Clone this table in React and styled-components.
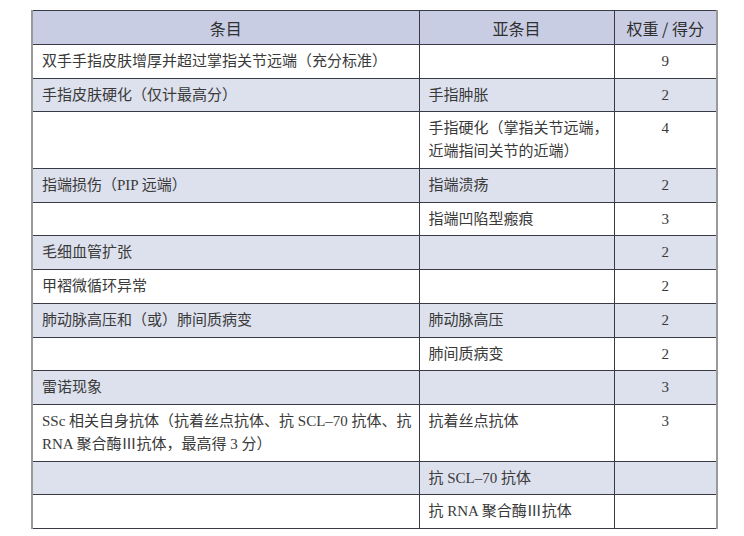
import React from 'react';
import styled, { createGlobalStyle } from 'styled-components';

const GlobalStyle = createGlobalStyle`
  html, body {
    margin: 0;
    padding: 0;
    background: #fff;
  }
`;

const rows = [
  { item: '双手手指皮肤增厚并超过掌指关节远端（充分标准）', sub: '', score: '9' },
  { item: '手指皮肤硬化（仅计最高分）', sub: '手指肿胀', score: '2' },
  { item: '', sub: ['手指硬化（掌指关节远端，', '近端指间关节的近端）'], score: '4' },
  { item: '指端损伤（PIP 远端）', sub: '指端溃疡', score: '2' },
  { item: '', sub: '指端凹陷型瘢痕', score: '3' },
  { item: '毛细血管扩张', sub: '', score: '2' },
  { item: '甲褶微循环异常', sub: '', score: '2' },
  { item: '肺动脉高压和（或）肺间质病变', sub: '肺动脉高压', score: '2' },
  { item: '', sub: '肺间质病变', score: '2' },
  { item: '雷诺现象', sub: '', score: '3' },
  {
    item: ['SSc 相关自身抗体（抗着丝点抗体、抗 SCL–70 抗体、抗', 'RNA 聚合酶Ⅲ抗体，最高得 3 分）'],
    sub: '抗着丝点抗体',
    score: '3',
  },
  { item: '', sub: '抗 SCL–70 抗体', score: '' },
  { item: '', sub: '抗 RNA 聚合酶Ⅲ抗体', score: '' },
];

function Lines({ text }) {
  if (Array.isArray(text)) {
    return text.map((t, i) => <Line key={i}>{t}</Line>);
  }
  return text;
}

export default function App() {
  return (
    <>
      <GlobalStyle />
      <Page>
        <Table>
          <colgroup>
            <col style={{ width: 387 }} />
            <col style={{ width: 195 }} />
            <col style={{ width: 103 }} />
          </colgroup>
          <thead>
            <tr>
              <Head>条目</Head>
              <Head>亚条目</Head>
              <Head>权重 / 得分</Head>
            </tr>
          </thead>
          <tbody>
            {rows.map((r, i) => (
              <Row key={i} $shaded={i % 2 === 1}>
                <Cell>
                  <Lines text={r.item} />
                </Cell>
                <Cell>
                  <Lines text={r.sub} />
                </Cell>
                <Cell $center>{r.score}</Cell>
              </Row>
            ))}
          </tbody>
        </Table>
      </Page>
    </>
  );
}

const Page = styled.div`
  padding: 10px 0 0 31px;
  width: 744px;
  height: 536px;
  box-sizing: border-box;
  overflow: hidden;
`;

const Table = styled.table`
  width: 686px;
  table-layout: fixed;
  border-collapse: collapse;
  border-left: 2px solid #9a9a9a;
  border-right: 2px solid #9a9a9a;
  border-top: 1px solid #3a3a44;
  font-family: "Liberation Serif", "Noto Sans CJK SC", serif;
  font-size: 15px;
  color: #3a3a3a;
`;

const Head = styled.th`
  height: 33px;
  padding: 0;
  background: #c8cde4;
  border: 1px solid #3a3a44;
  border-top: none;
  font-family: "Noto Sans CJK SC", sans-serif;
  font-weight: 400;
  font-size: 16px;
  color: #303030;
  text-align: center;
  vertical-align: middle;
  &:first-child {
    border-left: none;
  }
  &:last-child {
    border-right: none;
  }
`;

const Row = styled.tr`
  background: ${({ $shaded }) => ($shaded ? '#dde1ed' : '#fff')};
`;

const Cell = styled.td`
  padding: 5px 9px 4.7px;
  line-height: 23px;
  vertical-align: top;
  white-space: nowrap;
  overflow: visible;
  text-align: ${({ $center }) => ($center ? 'center' : 'left')};
  border: 1px solid #3a3a44;
  &:first-child {
    border-left: none;
  }
  &:last-child {
    border-right: none;
  }
`;

const Line = styled.span`
  display: block;
`;
